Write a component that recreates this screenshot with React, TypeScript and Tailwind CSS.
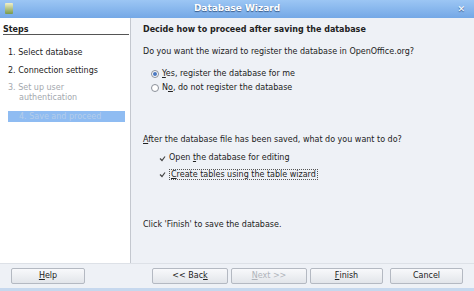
import React from "react";

const font = { fontFamily: '"DejaVu Sans", "Liberation Sans", sans-serif' };

function U({ children }: { children: React.ReactNode }) {
  return <span className="underline underline-offset-1">{children}</span>;
}

function Radio({ checked }: { checked?: boolean }) {
  return (
    <span className="inline-flex w-[8px] h-[8px] rounded-full border border-[#8a8f99] bg-white items-center justify-center mr-[3px]">
      {checked && <span className="w-[4px] h-[4px] rounded-full bg-[#4a78c0]" />}
    </span>
  );
}

function Check() {
  return (
    <svg width="7" height="7" viewBox="0 0 7 7" className="mr-[3px]">
      <path d="M1 3.5 L3 5.5 L6 1.5" fill="none" stroke="#444" strokeWidth="1.2" />
    </svg>
  );
}

function Btn({ children, disabled, w }: { children: React.ReactNode; disabled?: boolean; w: string }) {
  return (
    <div
      className={`${w} h-[16px] rounded-[2px] border border-[#b4b9c2] bg-gradient-to-b from-[#f8f9fb] to-[#e2e5ea] flex items-center justify-center text-[8px] ${
        disabled ? "text-[#b0b4bb]" : "text-[#222]"
      }`}
    >
      {children}
    </div>
  );
}

export default function App() {
  return (
    <div className="w-[474px] h-[291px] flex flex-col bg-[#eef1f6] text-[#222] overflow-hidden" style={font}>
      {/* title bar */}
      <div className="h-[18px] relative flex items-center justify-center bg-gradient-to-b from-[#9cc6f4] to-[#74a8e6]">
        <div className="absolute left-[5px] top-[3px] w-[8px] h-[11px] rounded-[1px] bg-gradient-to-b from-[#f2f0c8] to-[#7a9a4a]" />
        <span className="text-[9px] font-bold text-white [text-shadow:0_1px_1px_#3a5a88]">Database Wizard</span>
        <span className="absolute right-[9px] top-[3px] text-[9px] font-bold text-white [text-shadow:0_1px_1px_#3a5a88]">✕</span>
      </div>

      <div className="flex h-[245px]">
        {/* steps */}
        <div className="w-[131px] bg-white border-r border-[#c4c8cf] pt-[7px] text-[8px]">
          <div className="ml-[3px] mr-[1px] font-bold leading-[9px] border-b border-[#555] pb-0">Steps</div>
          <div className="pl-[8px] leading-[10px] mt-[13px]">1. Select database</div>
          <div className="pl-[8px] leading-[10px] mt-[8px]">2. Connection settings</div>
          <div className="pl-[8px] leading-[10px] mt-[7px] text-[#a4a8ae]">
            <div>3. Set up user</div>
            <div className="pl-[11px]">authentication</div>
          </div>
          <div className="ml-[8px] w-[117px] h-[11px] mt-[8px] bg-[#8fbcf2] text-[#b4cdea] leading-[11px] pl-[11px]">
            4. Save and proceed
          </div>
        </div>

        {/* content */}
        <div className="flex-1 pl-[12px] pt-[7px] text-[8px] leading-[10px]">
          <div className="font-bold">Decide how to proceed after saving the database</div>
          <div className="mt-[12px]">Do you want the wizard to register the database in OpenOffice.org?</div>
          <div className="mt-[12px] pl-[8px] flex items-center">
            <Radio checked />
            <span>
              <U>Y</U>es, register the database for me
            </span>
          </div>
          <div className="mt-[4px] pl-[8px] flex items-center">
            <Radio />
            <span>
              N<U>o</U>, do not register the database
            </span>
          </div>
          <div className="mt-[42px]">
            <U>A</U>fter the database file has been saved, what do you want to do?
          </div>
          <div className="mt-[8px] pl-[16px] flex items-center">
            <Check />
            <span>
              Open <U>t</U>he database for editing
            </span>
          </div>
          <div className="mt-[6px] pl-[16px] flex items-center">
            <Check />
            <span className="border border-dotted border-[#555] px-[1px] leading-[9px]">
              <U>C</U>reate tables using the table wizard
            </span>
          </div>
          <div className="mt-[40px]">Click 'Finish' to save the database.</div>
        </div>
      </div>

      {/* buttons */}
      <div className="h-[25px] flex items-center border-t border-[#dde1e7] pl-[11px] pr-[11px]">
        <Btn w="w-[74px]">
          <U>H</U>elp
        </Btn>
        <div className="flex-1" />
        <Btn w="w-[76px]">
          &lt;&lt; Bac<U>k</U>
        </Btn>
        <div className="w-[3px]" />
        <Btn w="w-[76px]" disabled>
          <U>N</U>ext &gt;&gt;
        </Btn>
        <div className="w-[3px]" />
        <Btn w="w-[73px]">
          <U>F</U>inish
        </Btn>
        <div className="w-[7px]" />
        <Btn w="w-[73px]">Cancel</Btn>
      </div>
      <div className="h-[3px] bg-[#c6d8ee]" />
    </div>
  );
}
